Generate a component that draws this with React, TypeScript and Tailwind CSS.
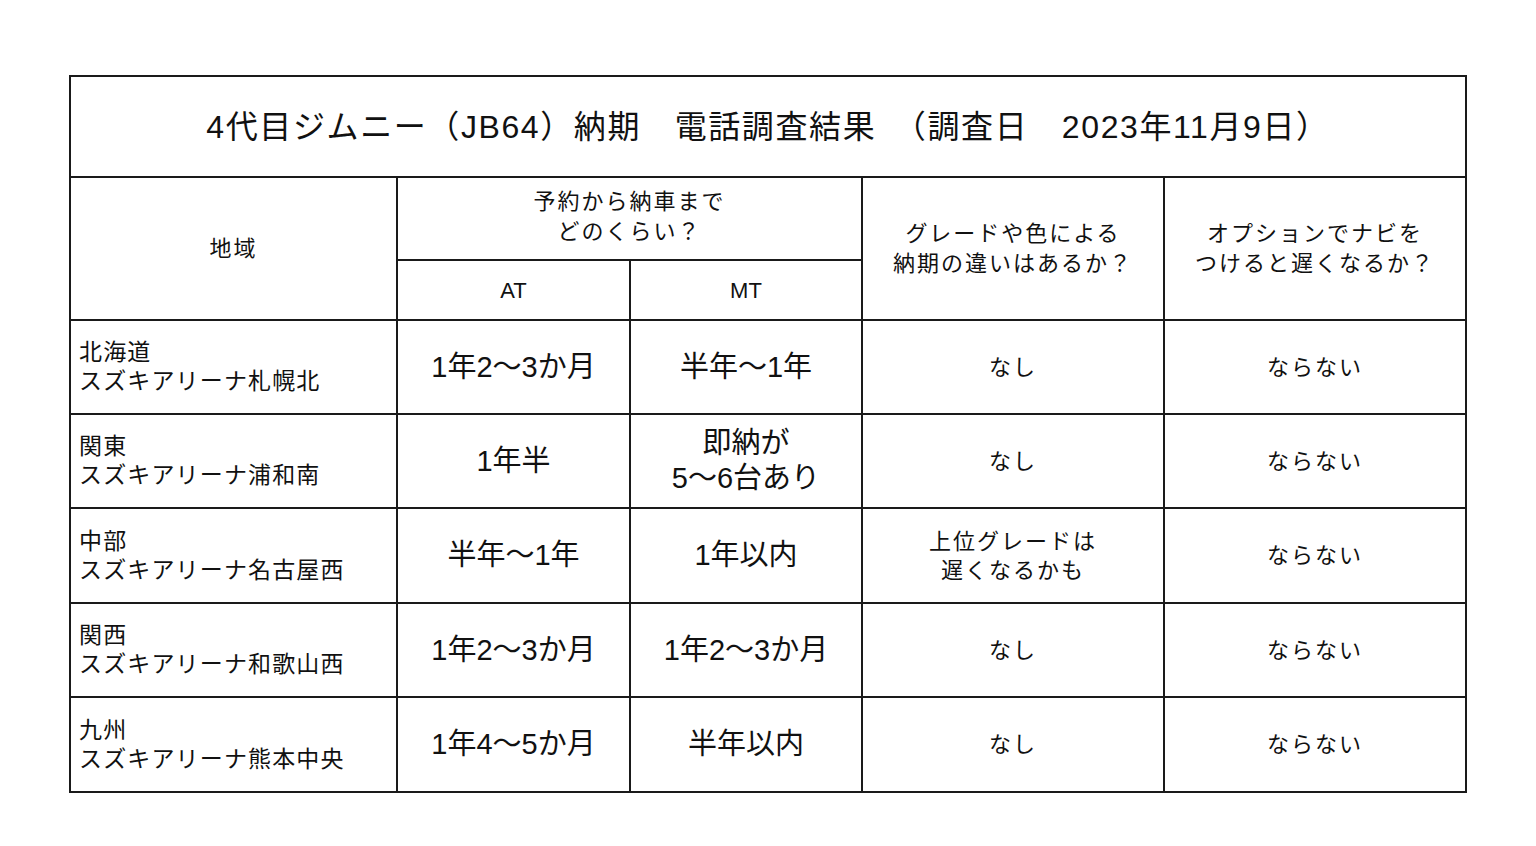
import React from 'react';

const rows = [
  { area: '北海道', shop: 'スズキアリーナ札幌北', at: ['1年2〜3か月'], mt: ['半年〜1年'], grade: ['なし'], h: 'h-[94px]' },
  { area: '関東', shop: 'スズキアリーナ浦和南', at: ['1年半'], mt: ['即納が', '5〜6台あり'], grade: ['なし'], h: 'h-[94px]' },
  { area: '中部', shop: 'スズキアリーナ名古屋西', at: ['半年〜1年'], mt: ['1年以内'], grade: ['上位グレードは', '遅くなるかも'], h: 'h-[95px]' },
  { area: '関西', shop: 'スズキアリーナ和歌山西', at: ['1年2〜3か月'], mt: ['1年2〜3か月'], grade: ['なし'], h: 'h-[94px]' },
  { area: '九州', shop: 'スズキアリーナ熊本中央', at: ['1年4〜5か月'], mt: ['半年以内'], grade: ['なし'], h: 'h-[95px]' },
];

const cell = 'border-2 border-[#1a1a1a] align-middle';

function Lines({ items }: { items: string[] }) {
  return (
    <>
      {items.map((t, i) => (
        <div key={i}>{t}</div>
      ))}
    </>
  );
}

export default function App() {
  return (
    <main
      className="min-h-screen bg-white pt-[75px] text-[#111]"
      style={{ fontFamily: '"Liberation Sans", "Noto Sans CJK JP", sans-serif' }}
    >
      <table className="mx-auto w-[1396px] table-fixed border-collapse">
        <colgroup>
          <col className="w-[327px]" />
          <col className="w-[233px]" />
          <col className="w-[232px]" />
          <col className="w-[302px]" />
          <col className="w-[302px]" />
        </colgroup>
        <tbody>
          <tr className="h-[101px]">
            <td colSpan={5} className={`${cell} text-center text-[32px] tracking-[0.05em]`}>
              4代目ジムニー（JB64）納期　電話調査結果　（調査日　2023年11月9日）
            </td>
          </tr>
          <tr className="h-[83px]">
            <td rowSpan={2} className={`${cell} text-center text-[22px] tracking-[0.09em]`}>地域</td>
            <td colSpan={2} className={`${cell} text-center text-[22px] leading-[30px] tracking-[0.09em]`}>
              <div className="pb-1">予約から納車まで</div>
              <div className="-mt-1 pb-1">どのくらい？</div>
            </td>
            <td rowSpan={2} className={`${cell} text-center text-[22px] leading-[30px] tracking-[0.09em]`}>
              <div>グレードや色による</div>
              <div>納期の違いはあるか？</div>
            </td>
            <td rowSpan={2} className={`${cell} text-center text-[22px] leading-[30px] tracking-[0.09em]`}>
              <div>オプションでナビを</div>
              <div>つけると遅くなるか？</div>
            </td>
          </tr>
          <tr className="h-[60px]">
            <td className={`${cell} text-center text-[22px]`}>AT</td>
            <td className={`${cell} text-center text-[22px]`}>MT</td>
          </tr>
          {rows.map((r) => (
            <tr key={r.area} className={r.h}>
              <td className={`${cell} pl-[8px] text-left text-[23px] leading-[29px] tracking-[0.05em]`}>
                <div>{r.area}</div>
                <div>{r.shop}</div>
              </td>
              <td className={`${cell} text-center text-[29px] leading-[35px]`}>
                <Lines items={r.at} />
              </td>
              <td className={`${cell} text-center text-[29px] leading-[35px]`}>
                <Lines items={r.mt} />
              </td>
              <td className={`${cell} text-center text-[22px] leading-[29px] tracking-[0.09em]`}>
                <Lines items={r.grade} />
              </td>
              <td className={`${cell} text-center text-[22px] tracking-[0.09em]`}>ならない</td>
            </tr>
          ))}
        </tbody>
      </table>
    </main>
  );
}
